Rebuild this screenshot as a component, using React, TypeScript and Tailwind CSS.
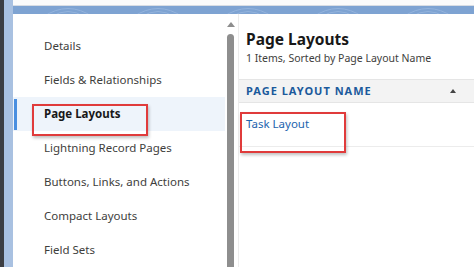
const navItems = [
  'Details',
  'Fields & Relationships',
  'Page Layouts',
  'Lightning Record Pages',
  'Buttons, Links, and Actions',
  'Compact Layouts',
  'Field Sets',
];

function ScrollBar() {
  return (
    <div className="w-[12px] relative flex flex-col items-center">
      <div className="mt-[8px] h-0 w-0 border-l-[4px] border-r-[4px] border-b-[5px] border-l-transparent border-r-transparent border-b-[#8d8d8d]" />
      <div className="mt-[7px] w-[7px] flex-1 rounded-t-[4px] bg-[#8e8e8e] mr-[2px]" />
    </div>
  );
}

// faint swirl pattern on the blue band
function Band() {
  const arcs = [30, 120, 210, 300, 390];
  return (
    <svg className="block" width="461" height="11" viewBox="0 0 461 11">
      <rect width="461" height="11" fill="#7ea3d2" />
      {arcs.map((x) => (
        <g key={x} fill="none" stroke="#9dbbe2" strokeWidth="1" opacity="0.7">
          <path d={`M${x} 11 Q${x + 25} -6 ${x + 50} 11`} />
          <path d={`M${x + 8} 11 Q${x + 25} 0 ${x + 42} 11`} />
        </g>
      ))}
    </svg>
  );
}

export default function App() {
  return (
    <div className="w-[474px] h-[267px] flex overflow-hidden bg-white" style={{ fontFamily: '"Noto Sans", "Open Sans", sans-serif' }}>
      <div className="w-[4px] bg-[#3c3e43]" />
      <div className="w-[9px] bg-[#a9c1e1]" />
      <div className="flex-1 flex flex-col">
        <div className="h-[7px] bg-[#fbfbfb] border-b border-[#d8dde4]" />
        <div className="h-[11px] overflow-hidden">
          <Band />
        </div>
        <div className="flex-1 flex relative">
          <nav className="w-[212px] pt-[15px] text-[11.5px] text-[#3e3e3c]">
            {navItems.map((item) => {
              const active = item === 'Page Layouts';
              return (
                <div
                  key={item}
                  className={
                    active
                      ? 'relative h-[34px] flex items-center pl-[31px] bg-[#eef4fb] font-bold text-[#181818]'
                      : 'h-[34px] flex items-center pl-[31px]'
                  }
                >
                  {active && <div className="absolute left-[1px] top-[2px] bottom-[1px] w-[3px] bg-[#4a8fe0]" />}
                  {item}
                </div>
              );
            })}
          </nav>
          <ScrollBar />
          <div className="flex-1 border-l border-[#ececec] ml-[1px]">
            <div className="px-[7px] pt-[15px]">
              <div className="text-[15.5px] font-bold text-[#181818] leading-[20px]">Page Layouts</div>
              <div className="text-[10.5px] text-[#3e3e3c] leading-[16px] mt-[1px]">1 Items, Sorted by Page Layout Name</div>
            </div>
            <div className="mt-[13px] h-[24px] bg-[#f3f3f3] border-y border-[#e5e5e5] flex items-center justify-between pl-[7px] pr-[18px]">
              <span className="text-[11px] font-bold tracking-[1px] text-[#1b5a9c]">PAGE LAYOUT NAME</span>
              <span className="h-0 w-0 border-l-[3px] border-r-[3px] border-b-[4px] border-l-transparent border-r-transparent border-b-[#444]" />
            </div>
            <div className="h-[44px] border-b border-[#ececec] flex items-center pl-[7px] pb-[2px]">
              <span className="text-[11.5px] text-[#1c63ae]">Task Layout</span>
            </div>
          </div>
          <div className="absolute left-[19px] top-[90px] w-[116px] h-[32px] border-2 border-[#e03b3b] shadow-[1px_2px_3px_rgba(0,0,0,0.25)]" />
          <div className="absolute left-[227px] top-[98px] w-[106px] h-[41px] border-2 border-[#e03b3b] shadow-[1px_2px_3px_rgba(0,0,0,0.25)]" />
        </div>
      </div>
    </div>
  );
}
